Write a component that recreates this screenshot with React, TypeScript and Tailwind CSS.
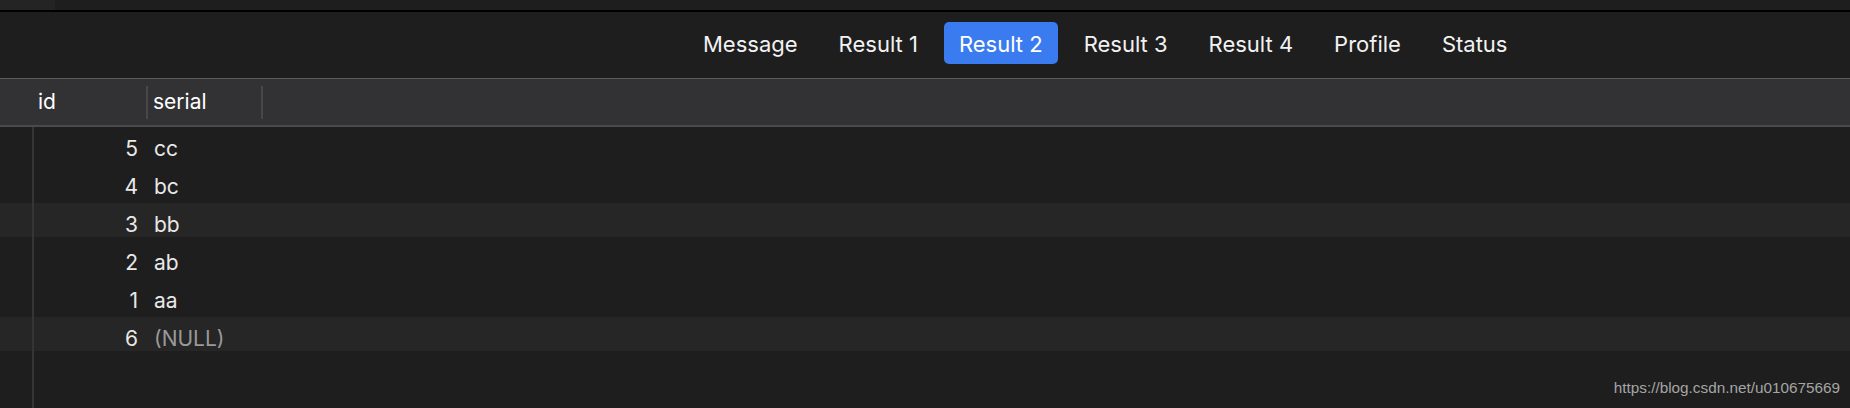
const TABS = ["Message", "Result 1", "Result 2", "Result 3", "Result 4", "Profile", "Status"];

const ROWS: { id: number; serial: string | null; striped?: boolean }[] = [
  { id: 5, serial: "cc" },
  { id: 4, serial: "bc" },
  { id: 3, serial: "bb", striped: true },
  { id: 2, serial: "ab" },
  { id: 1, serial: "aa" },
  { id: 6, serial: null, striped: true },
];

export default function App() {
  return (
    <div
      className="flex h-[408px] w-[1850px] flex-col overflow-hidden bg-[#1e1e1e] text-[#ececec]"
      style={{ fontFamily: "Inter, 'Liberation Sans', sans-serif" }}
    >
      {/* window strip above the tabs */}
      <div className="flex h-[10px] shrink-0">
        <div className="w-[55px] bg-[#242424]" />
        <div className="flex-1 bg-[#1e1e1e]" />
      </div>
      <div className="h-[2px] shrink-0 bg-black" />

      {/* result tabs */}
      <div className="flex h-[67px] shrink-0 items-center gap-[11px] border-b border-[#5c5c5c] pb-[5px] pl-[688px]">
        {TABS.map((t) => (
          <div
            key={t}
            className={
              t === "Result 2"
                ? "flex h-[42px] items-center rounded-[5px] bg-[#3a7cf0] px-[15px] pt-[4px] text-[22px] text-white"
                : "flex h-[42px] items-center px-[15px] pt-[4px] text-[22px] text-[#f2f2f2]"
            }
          >
            {t}
          </div>
        ))}
      </div>

      {/* column header */}
      <div className="flex h-[48px] shrink-0 items-center border-b-2 border-[#4a4a4c] bg-[#323234] text-[21px] text-white">
        <div className="w-[33px] shrink-0" />
        <div className="w-[113px] shrink-0 pl-[5px]">id</div>
        <div className="h-[33px] w-[2px] shrink-0 bg-[#48484a]" />
        <div className="w-[113px] shrink-0 pl-[5px]">serial</div>
        <div className="h-[33px] w-[2px] shrink-0 bg-[#48484a]" />
      </div>

      {/* rows */}
      <div className="relative flex flex-1 flex-col gap-[4px]">
        <div className="absolute bottom-0 left-[32px] top-0 w-[2px] bg-[#353535]" />
        {ROWS.map((r) => (
          <div
            key={r.id}
            className={`flex h-[34px] shrink-0 items-center pt-[9px] text-[21px] ${r.striped ? "bg-[#262626]" : ""}`}
          >
            <div className="w-[33px] shrink-0" />
            <div className="w-[113px] shrink-0 pr-[8px] text-right text-[#e8e8e8]">{r.id}</div>
            <div className="pl-[8px]">
              {r.serial === null ? (
                <span className="text-[#9a9a9a]">(NULL)</span>
              ) : (
                <span className="text-[#e8e8e8]">{r.serial}</span>
              )}
            </div>
          </div>
        ))}
        <div
          className="absolute bottom-[8px] right-[10px] text-[15.3px] text-[#a5a5a5]"
          style={{ fontFamily: "'Liberation Sans', Arial, sans-serif" }}
        >
          https://blog.csdn.net/u010675669
        </div>
      </div>
    </div>
  );
}
